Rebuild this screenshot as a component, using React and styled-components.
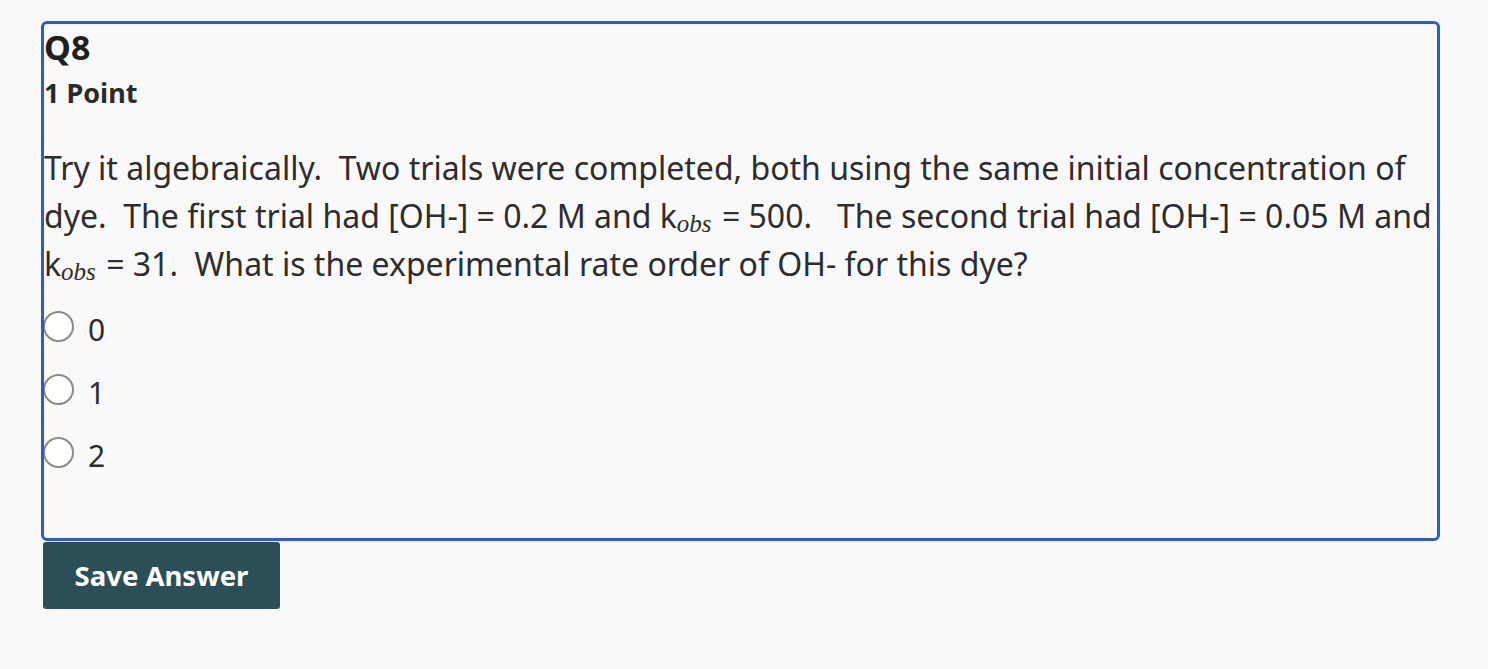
import React from "react";
import styled, { createGlobalStyle } from "styled-components";

const Global = createGlobalStyle`
  html, body { margin: 0; padding: 0; background: #f9f9f9; }
  body { font-family: "Noto Sans", "Open Sans", sans-serif; color: #2d2d2d; }
`;

const Page = styled.main`
  padding: 24px 51px 0 44px;
`;

const Question = styled.section`
  outline: 3px solid #2a5ec6;
  border-radius: 3px;
  padding-bottom: 54px;
`;

const Title = styled.h2`
  margin: 0;
  padding-top: 3px;
  font-size: 34px;
  line-height: 40px;
  font-weight: 700;
  color: #1f1f1f;
`;

const Points = styled.div`
  margin-top: 8px;
  font-size: 27px;
  line-height: 36px;
  font-weight: 700;
  color: #2a2a2a;
`;

const Prompt = styled.p`
  margin: 33px 0 7px;
  font-size: 32px;
  line-height: 48px;
`;

const Sub = styled.sub`
  font-family: "Liberation Serif", "DejaVu Serif", "Times New Roman", serif;
  font-style: italic;
  font-size: 25px;
  line-height: 0;
  vertical-align: -4px;
  margin-right: 2px;
`;

const Options = styled.div`
  display: flex;
  flex-direction: column;
`;

const Option = styled.label`
  display: flex;
  align-items: center;
  gap: 14px;
  height: 63px;
  margin-left: -1px;
  font-size: 30px;
  cursor: pointer;
`;

const Radio = styled.span`
  width: 31px;
  height: 31px;
  box-sizing: border-box;
  border-radius: 50%;
  border: 2px solid #8a8a8a;
  background: #fff;
  flex: none;
`;

const OptionText = styled.span`
  padding-top: 6px;
`;

const SaveButton = styled.button`
  margin-top: 4px;
  margin-left: -1px;
  width: 237px;
  height: 67px;
  border: none;
  border-radius: 3px;
  background: #2c4f57;
  color: #fff;
  font-family: "Noto Sans", "Open Sans", sans-serif;
  font-size: 27.5px;
  font-weight: 700;
  cursor: pointer;
`;

const K = () => (
  <>
    k<Sub>obs</Sub>
  </>
);

export default function App() {
  return (
    <>
      <Global />
      <Page>
        <Question>
          <Title>Q8</Title>
          <Points>1 Point</Points>
          <Prompt>
            Try it algebraically.{"\u00a0 "}Two trials were completed, both using the same
            initial concentration of dye.{"\u00a0 "}The first trial had [OH-] = 0.2 M and{" "}
            <K /> = 500.{"\u00a0\u00a0 "}The second trial had [OH-] = 0.05 M and <K /> = 31.
            {"\u00a0 "}What is the experimental rate order of OH- for this dye?
          </Prompt>
          <Options>
            {["0", "1", "2"].map((v) => (
              <Option key={v}>
                <Radio />
                <OptionText>{v}</OptionText>
              </Option>
            ))}
          </Options>
        </Question>
        <SaveButton>Save Answer</SaveButton>
      </Page>
    </>
  );
}
